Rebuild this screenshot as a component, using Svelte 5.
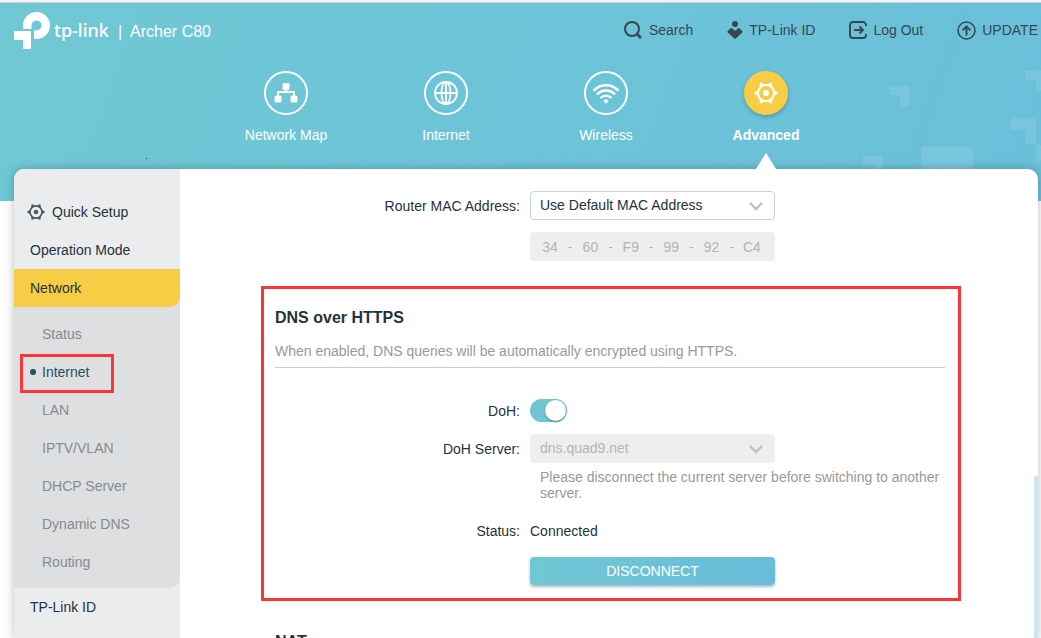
<script lang="ts">
  type IconName = 'search' | 'cloud' | 'logout' | 'update' | 'map' | 'globe' | 'wifi' | 'gear';

  interface NavItem {
    label: string;
    icon: IconName;
  }

  const tools: NavItem[] = [
    { label: 'Search', icon: 'search' },
    { label: 'TP-Link ID', icon: 'cloud' },
    { label: 'Log Out', icon: 'logout' },
    { label: 'UPDATE', icon: 'update' }
  ];

  const tabs: NavItem[] = [
    { label: 'Network Map', icon: 'map' },
    { label: 'Internet', icon: 'globe' },
    { label: 'Wireless', icon: 'wifi' },
    { label: 'Advanced', icon: 'gear' }
  ];

  const networkPages = ['Status', 'Internet', 'LAN', 'IPTV/VLAN', 'DHCP Server', 'Dynamic DNS', 'Routing'];
  const mac = ['34', '60', 'F9', '99', '92', 'C4'];

  let activeTab = $state('Advanced');
  let activePage = $state('Internet');
  let dohEnabled = $state(true);
  let connected = $state(true);

  function open(event: MouseEvent, page: string) {
    event.preventDefault();
    activePage = page;
  }
</script>

{#snippet icon(name: IconName)}
  {#if name === 'search'}
    <svg width="19" height="18" viewBox="0 0 19 18" fill="none" stroke="currentColor" stroke-width="2" aria-hidden="true">
      <circle cx="8" cy="8" r="7" />
      <path d="M13 13l4 4" stroke-width="2.6" />
    </svg>
  {:else if name === 'cloud'}
    <svg width="16" height="18" viewBox="0 0 16 18" fill="currentColor" aria-hidden="true">
      <circle cx="8" cy="3" r="3" />
      <path d="M.6 10.2l3-2.9q.6-.4 1.2 0L8 9.8l3.2-2.5q.6-.4 1.2 0l3 2.9q.5.6 0 1.2l-6.7 6.2q-.7.6-1.4 0L.6 11.4q-.5-.6 0-1.2z" />
    </svg>
  {:else if name === 'logout'}
    <svg width="18" height="18" viewBox="0 0 18 18" fill="none" stroke="currentColor" stroke-width="1.9" aria-hidden="true">
      <path d="M17 5V4a3 3 0 0 0-3-3H4a3 3 0 0 0-3 3v10a3 3 0 0 0 3 3h10a3 3 0 0 0 3-3v-1" />
      <path d="M5 9h9M10.5 5.5L14 9l-3.5 3.5" />
    </svg>
  {:else if name === 'update'}
    <svg width="19" height="19" viewBox="0 0 19 19" fill="none" stroke="currentColor" stroke-width="1.5" aria-hidden="true">
      <circle cx="9.5" cy="9.5" r="8.5" />
      <path d="M9.5 14.5v-9M5.5 9.3l4-4 4 4" stroke-width="1.9" />
    </svg>
  {:else if name === 'map'}
    <svg width="24" height="24" viewBox="0 0 24 24" fill="currentColor" aria-hidden="true">
      <rect x="8.5" y="2" width="7" height="7" rx="1.5" />
      <rect x=".5" y="14.5" width="7" height="7" rx="1.5" />
      <rect x="16.5" y="14.5" width="7" height="7" rx="1.5" />
      <path d="M12 8v3.5M4 15v-4h16v4" fill="none" stroke="currentColor" stroke-width="1.8" />
    </svg>
  {:else if name === 'globe'}
    <svg width="24" height="24" viewBox="0 0 24 24" fill="none" stroke="currentColor" stroke-width="1.8" aria-hidden="true">
      <circle cx="12" cy="12" r="11" />
      <ellipse cx="12" cy="12" rx="4.5" ry="11" />
      <path d="M12 1v22M1 12h22" />
    </svg>
  {:else if name === 'wifi'}
    <svg width="28" height="24" viewBox="0 0 28 24" fill="none" stroke="currentColor" stroke-width="2.4" aria-hidden="true">
      <path d="M1.5 9.8C8.5 2.4 19.5 2.4 26.5 9.8" />
      <path d="M5 13.4c5-5.2 13-5.2 18 0" />
      <path d="M8.5 17c3.2-3.2 7.8-3.2 11 0" />
      <path d="M11.3 19.8q2.7-2.4 5.4 0L14 22.8z" fill="currentColor" stroke="none" />
    </svg>
  {:else}
    <svg width="24" height="24" viewBox="0 0 24 24" fill="none" stroke="currentColor" stroke-linejoin="round" aria-hidden="true">
      <path d="M7.4 4h9.2l4.6 8-4.6 8H7.4L2.8 12z" stroke-width="2" />
      <circle cx="12" cy="12" r="7.8" stroke-width="1.6" />
      <g fill="currentColor" stroke="none">
        <circle cx="12" cy="12" r="3.1" />
        <circle cx="7.3" cy="3.3" r="1.7" />
        <circle cx="16.7" cy="3.3" r="1.7" />
        <circle cx="7.3" cy="20.7" r="1.7" />
        <circle cx="16.7" cy="20.7" r="1.7" />
        <circle cx="2.1" cy="12" r="1.7" />
        <circle cx="21.9" cy="12" r="1.7" />
      </g>
    </svg>
  {/if}
{/snippet}

{#snippet chevron()}
  <svg class="chevron" width="14" height="9" viewBox="0 0 14 9" fill="none" stroke="currentColor" stroke-width="2.4" aria-hidden="true">
    <path d="M1 1l6 6 6-6" />
  </svg>
{/snippet}

<div class="page">
  <svg class="pattern" width="221" height="119" viewBox="0 0 221 119" aria-hidden="true">
    <path d="M69 36h20v20h-9V45H69zM205 21h16v20h-5V30h-11zM191 68h25v26h-11V80h-14zM216 95h5v16h-5zM101 97h52v22h-52zM43 106h20v13h-9v-4H43z" />
  </svg>
  <span class="speck"></span>

  <header class="topbar">
    <a class="brand" href="#home">
      <svg width="36" height="37" viewBox="0 0 36 37" fill="currentColor" aria-hidden="true">
        <path d="M9 17v-3.5A13.5 13.5 0 1 1 22.5 27H20v-8.5h2.5a5 5 0 1 0-5-5V17z" />
        <path d="M1 19h16v17q0 1-1 1h-6q-1 0-1-1v-8H1q-1 0-1-1v-7q0-1 1-1z" />
      </svg>
      <span class="wordmark">tp-link</span>
    </a>
    <span class="model">|&nbsp; Archer C80</span>
    <nav class="tools" aria-label="Account">
      {#each tools as tool}
        <button class="tool" type="button">
          {@render icon(tool.icon)}
          {tool.label}
        </button>
      {/each}
    </nav>
  </header>

  <nav class="tabs" aria-label="Sections">
    {#each tabs as tab}
      <button class="tab" class:active={tab.label === activeTab} type="button" onclick={() => (activeTab = tab.label)}>
        <span class="tab-icon">{@render icon(tab.icon)}</span>
        {tab.label}
      </button>
    {/each}
  </nav>

  <div class="panel">
    <nav class="sidebar" aria-label="Advanced settings">
      <a class="item with-icon" href="#quick-setup">{@render icon('gear')}Quick Setup</a>
      <a class="item" href="#operation-mode">Operation Mode</a>
      <a class="item current" href="#network">Network</a>
      <div class="submenu">
        {#each networkPages as page}
          <a class="subitem" class:active={page === activePage} href="#network" onclick={(e) => open(e, page)}>{page}</a>
        {/each}
      </div>
      <a class="item" href="#tplink-id">TP-Link ID</a>
    </nav>

    <main class="content">
      <div class="fields">
        <label for="mac-mode">Router MAC Address:</label>
        <div class="select">
          <select id="mac-mode">
            <option>Use Default MAC Address</option>
            <option>Clone Current Device MAC</option>
            <option>Use Custom MAC Address</option>
          </select>
          {@render chevron()}
        </div>
        <div class="mac">
          {#each mac as part, i}
            {#if i > 0}<span>-</span>{/if}
            <input value={part} aria-label="MAC address part {i + 1}" disabled />
          {/each}
        </div>
      </div>

      <section class="doh">
        <h2>DNS over HTTPS</h2>
        <p class="intro">When enabled, DNS queries will be automatically encrypted using HTTPS.</p>

        <div class="row toggle-row">
          <label for="doh">DoH:</label>
          <input id="doh" class="switch" type="checkbox" role="switch" bind:checked={dohEnabled} />
        </div>
        <div class="row">
          <label for="doh-server">DoH Server:</label>
          <div class="select">
            <select id="doh-server" disabled={connected}>
              <option>dns.quad9.net</option>
            </select>
            {@render chevron()}
          </div>
          <p class="hint">Please disconnect the current server before switching to another server.</p>
        </div>
        <div class="row status">
          <span class="label">Status:</span>
          <span>{connected ? 'Connected' : 'Disconnected'}</span>
        </div>
        <div class="row">
          <button class="primary" type="button" onclick={() => (connected = !connected)}>
            {connected ? 'DISCONNECT' : 'CONNECT'}
          </button>
        </div>
      </section>

      <section class="nat">
        <h2>NAT</h2>
      </section>
    </main>
    <span class="scroll-thumb"></span>
  </div>
</div>

<style>
  :global(body) {
    background: #fefefe;
  }

  .page {
    position: relative;
    display: flex;
    flex-direction: column;
    box-sizing: border-box;
    height: 100vh;
    overflow: hidden;
    border-top: 2px solid #f4f4f4;
    background: linear-gradient(110deg, #70c8d4, #6abfda) no-repeat 0 0 / 100% 199px;
    box-shadow: inset 0 1px #c5d5d8;
    color: #25323a;
    font: 14px/20px "Liberation Sans", Arial, sans-serif;
  }

  .page *,
  .page *::before,
  .page *::after {
    box-sizing: border-box;
  }

  a {
    color: inherit;
    text-decoration: none;
  }

  button,
  input,
  select {
    margin: 0;
    padding: 0;
    border: 0;
    background: none;
    color: inherit;
    font: inherit;
  }

  button {
    cursor: pointer;
  }

  .pattern {
    position: absolute;
    top: 48px;
    right: 0;
    fill: rgba(255, 255, 255, 0.1);
  }

  .speck {
    position: absolute;
    top: 156px;
    left: 146px;
    width: 1px;
    height: 1px;
    background: #000;
  }

  .topbar {
    display: flex;
    flex-shrink: 0;
    align-items: center;
    height: 56px;
    padding: 0 3px 0 14px;
  }

  .brand {
    display: flex;
    align-items: center;
    gap: 4px;
    color: #fff;
  }

  .wordmark {
    font: 500 18px/24px "Noto Sans", sans-serif;
  }

  .model {
    margin-left: 9px;
    padding-top: 4px;
    color: #fff;
    font-size: 16px;
  }

  .tools {
    display: flex;
    gap: 34px;
    margin-left: auto;
  }

  .tool {
    display: flex;
    align-items: center;
    gap: 6px;
    color: #354850;
  }

  .tabs {
    display: flex;
    flex-shrink: 0;
    justify-content: center;
    padding: 13px 3px 0 14px;
  }

  .tab {
    position: relative;
    display: flex;
    flex-direction: column;
    align-items: center;
    gap: 10px;
    width: 160px;
    padding-bottom: 24px;
    color: #fff;
  }

  .tab-icon {
    display: flex;
    align-items: center;
    justify-content: center;
    width: 44px;
    height: 44px;
    border: 2px solid #fff;
    border-radius: 50%;
  }

  .tab.active {
    z-index: 1;
    font-weight: bold;
  }

  .tab.active .tab-icon {
    border-color: #f7cd45;
    background: #f7cd45;
    box-shadow: 0 2px 4px rgba(0, 60, 80, 0.3);
  }

  .tab.active::after {
    content: '';
    position: absolute;
    bottom: 0;
    border: solid transparent;
    border-width: 0 10px 16px;
    border-bottom-color: #fff;
  }

  .panel {
    position: relative;
    display: flex;
    flex: 1;
    min-height: 0;
    margin: 0 3px 0 14px;
    border-radius: 10px 10px 0 0;
    background: #fff;
    box-shadow: 0 0 10px rgba(0, 0, 0, 0.25);
  }

  .sidebar {
    flex: 0 0 166px;
    padding-top: 24px;
    border-radius: 10px 0 0;
    background: #ebecee;
    overflow: hidden;
  }

  .item {
    display: flex;
    align-items: center;
    height: 38px;
    padding-left: 16px;
  }

  .with-icon {
    gap: 7px;
    padding-left: 13px;
  }

  .with-icon :global(svg) {
    width: 18px;
    height: 18px;
    color: #4e5a61;
  }

  .item.current {
    position: relative;
    border-radius: 0 0 10px;
    background: #f7cd45;
  }

  .submenu {
    margin-top: -10px;
    padding: 18px 0 7px;
    border-radius: 0 0 10px;
    background: #dedfe1;
  }

  .subitem {
    position: relative;
    display: flex;
    align-items: center;
    height: 38px;
    padding-left: 28px;
    color: #858b90;
  }

  .subitem.active {
    color: #1d5260;
  }

  .subitem.active::before {
    content: '';
    position: absolute;
    left: 16px;
    width: 6px;
    height: 6px;
    border-radius: 50%;
    background: currentColor;
  }

  .subitem.active::after {
    content: '';
    position: absolute;
    top: 1px;
    left: 6px;
    z-index: 1;
    width: 94px;
    height: 39px;
    border: 3px solid #fc3636;
  }

  .content {
    flex: 1;
    min-width: 0;
    padding: 22px 77px 0 81px;
    overflow: hidden;
  }

  .fields,
  .row {
    display: grid;
    grid-template-columns: 245px minmax(0, 1fr);
    column-gap: 10px;
    align-items: center;
  }

  .fields {
    row-gap: 12px;
    padding: 0 14px;
  }

  label,
  .label {
    text-align: right;
  }

  .select {
    position: relative;
    width: 245px;
    height: 29px;
  }

  select {
    width: 100%;
    height: 100%;
    padding: 0 32px 1px 9px;
    border: 1px solid #cdd1d3;
    border-radius: 4px;
    appearance: none;
  }

  select:disabled {
    border-color: #eee;
    background: #eee;
    color: #b4b4b4;
    opacity: 1;
  }

  .chevron {
    position: absolute;
    top: 11px;
    right: 12px;
    color: #bfbfbf;
    pointer-events: none;
  }

  .mac {
    display: flex;
    grid-column: 2;
    align-items: center;
    justify-content: space-between;
    width: 245px;
    height: 29px;
    padding: 0 11px 0 8px;
    border-radius: 4px;
    background: #eee;
    color: #b4b4b4;
  }

  .mac input {
    width: 24px;
    text-align: center;
  }

  .doh {
    margin-top: 25px;
    padding: 19px 13px 13px 11px;
    border: 3px solid #fc3636;
  }

  h2 {
    margin: 0;
    font-size: 16px;
    line-height: 20px;
  }

  .intro {
    margin: 13px 0 31px;
    padding-bottom: 6px;
    border-bottom: 1px solid #cacaca;
    color: #999;
  }

  .toggle-row {
    margin-bottom: 12px;
  }

  .switch {
    position: relative;
    width: 37px;
    height: 23px;
    border-radius: 12px;
    background: #bbb;
    appearance: none;
    cursor: pointer;
  }

  .switch::before {
    content: '';
    position: absolute;
    top: 1px;
    left: 1px;
    width: 21px;
    height: 21px;
    border-radius: 50%;
    background: #fff;
    box-shadow: 0 1px 2px rgba(0, 50, 70, 0.5);
  }

  .switch:checked {
    background: #70c6d3;
  }

  .switch:checked::before {
    left: 15px;
  }

  .hint {
    grid-column: 2;
    margin: 6px 0 0;
    padding-left: 10px;
    color: #999;
    line-height: 16px;
  }

  .status {
    margin: 20px 0 16px;
  }

  .primary {
    grid-column: 2;
    width: 245px;
    height: 28px;
    border-radius: 4px;
    background: linear-gradient(100deg, #70c7d4, #69bcda);
    box-shadow: 0 2px 3px rgba(0, 60, 80, 0.35);
    color: #fff;
  }

  .nat {
    margin-top: 31px;
    padding: 0 14px;
  }

  .scroll-thumb {
    position: absolute;
    top: 307px;
    right: 0;
    bottom: 0;
    width: 4px;
    border-radius: 2px 2px 0 0;
    background: #c5e9ee;
  }
</style>
